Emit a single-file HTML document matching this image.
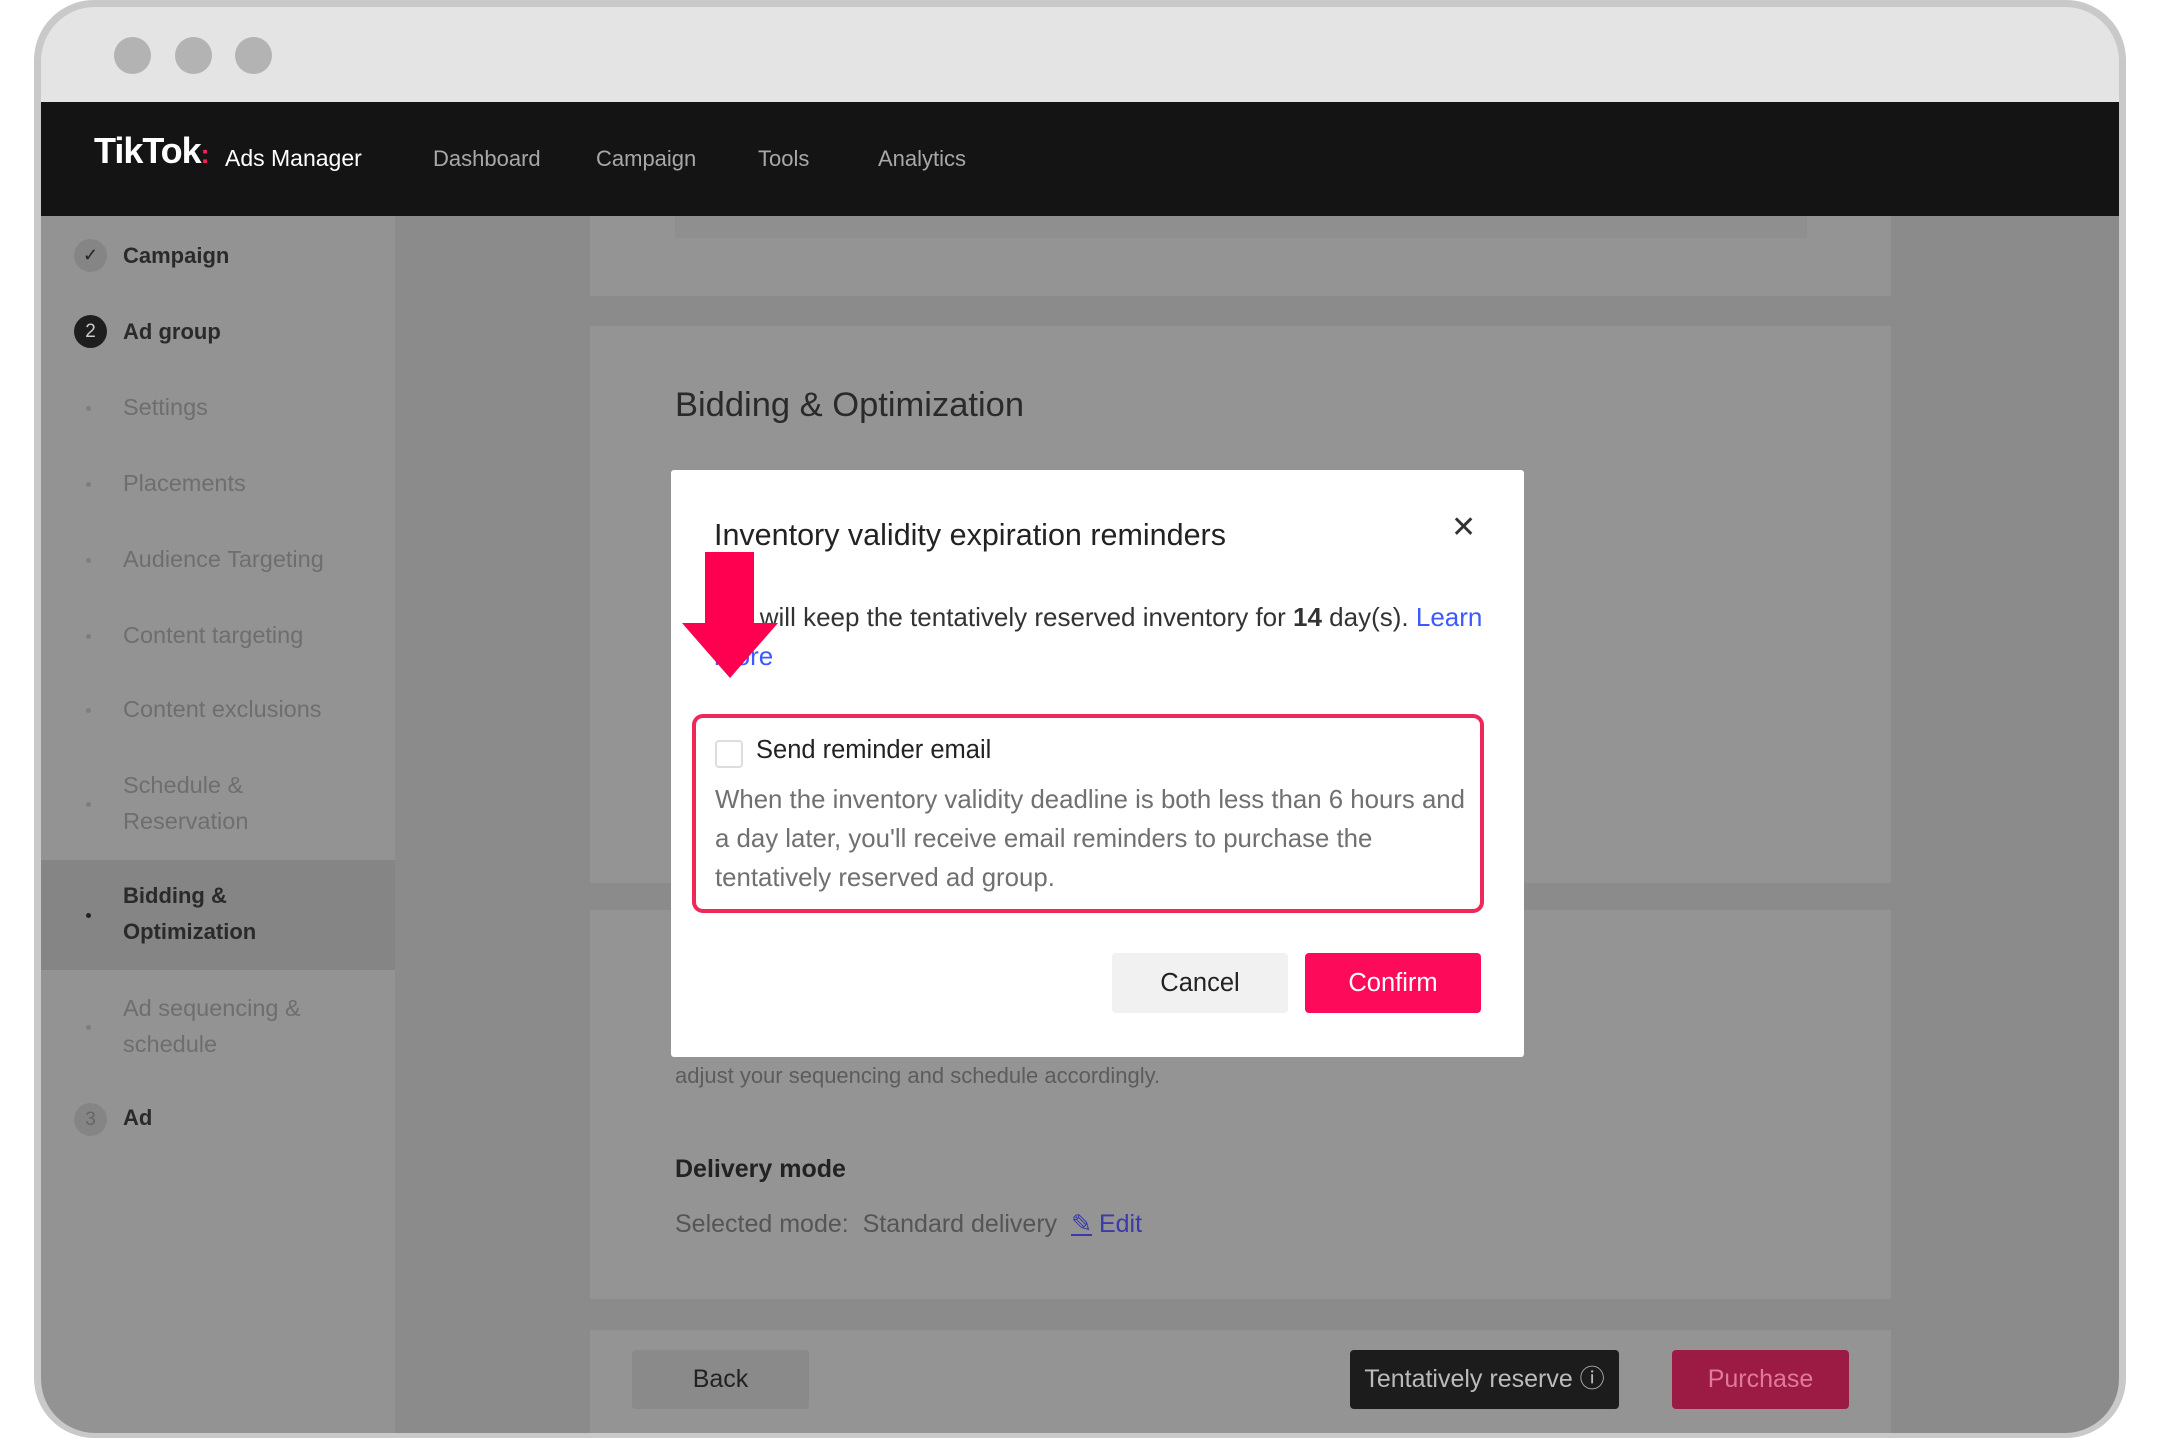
<!DOCTYPE html>
<html><head><meta charset="utf-8"><style>
*{margin:0;padding:0;box-sizing:border-box}
body{width:2160px;height:1440px;background:#fff;font-family:"Liberation Sans",sans-serif;position:relative;overflow:hidden}
.a{position:absolute}
.frame{left:34px;top:0;width:2092px;height:1438px;background:#c9c9c9;border-radius:60px}
.inner{left:41px;top:7px;width:2078px;height:1426px;background:#e4e4e4;border-radius:54px;overflow:hidden}
.dot{width:37px;height:37px;border-radius:50%;background:#b3b3b3;top:30px}
.hdr{left:0;top:95px;width:2078px;height:114px;background:#141414}
.nav{color:#a8a8a8;font-size:22px;top:44px}
.side{left:0;top:209px;width:354px;height:1220px;background:#939393}
.main{left:354px;top:209px;width:1724px;height:1220px;background:#8b8b8b}
.card{background:#949494}
.si{left:82px;font-size:23.5px;color:#6e6e6e;line-height:36px}
.sb{color:#2a2a2a;font-weight:bold;font-size:22px}
.bul{width:5px;height:5px;border-radius:50%;background:#7e7e7e;left:45px}
.modal{left:630px;top:463px;width:853px;height:587px;background:#fff;border-radius:3px}
</style></head><body>
<div class="a frame"></div>
<div class="a inner">
 <div class="a dot" style="left:73px"></div>
 <div class="a dot" style="left:134px"></div>
 <div class="a dot" style="left:194px"></div>
 <div class="a hdr">
  <div class="a" style="left:53px;top:28px;color:#fff;font-size:36px;font-weight:bold;letter-spacing:-1px">TikTok<span style="color:#ff1f5a;font-size:26px">:</span></div>
  <div class="a" style="left:184px;top:43px;color:#fff;font-size:23px">Ads Manager</div>
  <div class="a nav" style="left:392px">Dashboard</div>
  <div class="a nav" style="left:555px">Campaign</div>
  <div class="a nav" style="left:717px">Tools</div>
  <div class="a nav" style="left:837px">Analytics</div>
 </div>
 <div class="a side">
  <div class="a" style="left:33px;top:23px;width:33px;height:33px;border-radius:50%;background:#858585;color:#222;font-size:18px;text-align:center;line-height:33px">✓</div>
  <div class="a si sb" style="top:22px">Campaign</div>
  <div class="a" style="left:33px;top:99px;width:33px;height:33px;border-radius:50%;background:#1e1e1e;color:#ccc;font-size:19px;text-align:center;line-height:33px">2</div>
  <div class="a si sb" style="top:98px">Ad group</div>
  <div class="a bul" style="top:190px"></div><div class="a si" style="top:173px">Settings</div>
  <div class="a bul" style="top:266px"></div><div class="a si" style="top:249px">Placements</div>
  <div class="a bul" style="top:342px"></div><div class="a si" style="top:325px">Audience Targeting</div>
  <div class="a bul" style="top:418px"></div><div class="a si" style="top:401px">Content targeting</div>
  <div class="a bul" style="top:492px"></div><div class="a si" style="top:475px">Content exclusions</div>
  <div class="a bul" style="top:586px"></div><div class="a si" style="top:551px">Schedule &amp;<br>Reservation</div>
  <div class="a" style="left:0;top:644px;width:354px;height:110px;background:#858585"></div>
  <div class="a bul" style="top:697px;background:#222"></div><div class="a si sb" style="top:662px">Bidding &amp;<br>Optimization</div>
  <div class="a bul" style="top:809px"></div><div class="a si" style="top:774px">Ad sequencing &amp;<br>schedule</div>
  <div class="a" style="left:33px;top:887px;width:33px;height:33px;border-radius:50%;background:#858585;color:#666;font-size:19px;text-align:center;line-height:33px">3</div>
  <div class="a si sb" style="top:884px">Ad</div>
 </div>
 <div class="a main">
  <div class="a card" style="left:195px;top:0;width:1301px;height:80px"></div>
  <div class="a" style="left:280px;top:0;width:1132px;height:22px;background:#8f8f8f"></div>
  <div class="a card" style="left:195px;top:110px;width:1301px;height:557px"></div>
  <div class="a" style="left:280px;top:170px;font-size:34.5px;color:#2a2a2a">Bidding &amp; Optimization</div>
  <div class="a card" style="left:195px;top:694px;width:1301px;height:389px"></div>
  <div class="a" style="left:280px;top:847px;font-size:22px;color:#5c5c5c">adjust your sequencing and schedule accordingly.</div>
  <div class="a" style="left:280px;top:939px;font-size:25px;color:#222;font-weight:bold">Delivery mode</div>
  <div class="a" style="left:280px;top:993px;font-size:25px;color:#555">Selected mode:&nbsp; Standard delivery &nbsp;<span style="color:#3a3aa8"><u>✎</u> Edit</span></div>
  <div class="a card" style="left:195px;top:1114px;width:1301px;height:110px"></div>
  <div class="a" style="left:237px;top:1134px;width:177px;height:59px;background:#8a8a8a;border-radius:4px;font-size:25px;color:#222;text-align:center;line-height:59px">Back</div>
  <div class="a" style="left:955px;top:1134px;width:269px;height:59px;background:#1c1c1c;border-radius:4px;font-size:25px;color:#bbb;text-align:center;line-height:59px">Tentatively reserve ⓘ</div>
  <div class="a" style="left:1277px;top:1134px;width:177px;height:59px;background:#9b1b45;border-radius:4px;font-size:25px;color:#e07a99;text-align:center;line-height:59px">Purchase</div>
 </div>
 <div class="a modal">
  <div class="a" style="left:43px;top:48px;font-size:30.5px;color:#222">Inventory validity expiration reminders</div>
  <div class="a" style="left:780px;top:40px;font-size:30px;color:#333">✕</div>
  <div class="a" style="left:43px;top:128px;width:780px;font-size:26px;line-height:39px;color:#333">We will keep the tentatively reserved inventory for <b>14</b> day(s). <span style="color:#3d5afe">Learn more</span></div>
  <div class="a" style="left:21px;top:244px;width:792px;height:199px;border:4px solid #f0285a;border-radius:11px"></div>
  <div class="a" style="left:44px;top:270px;width:28px;height:28px;border:2px solid #ddd;border-radius:4px"></div>
  <div class="a" style="left:85px;top:266px;font-size:25.5px;color:#222">Send reminder email</div>
  <div class="a" style="left:44px;top:311px;width:760px;font-size:25.8px;line-height:39px;color:#707070">When the inventory validity deadline is both less than 6 hours and a day later, you'll receive email reminders to purchase the tentatively reserved ad group.</div>
  <div class="a" style="left:441px;top:483px;width:176px;height:60px;background:#f1f1f1;border-radius:4px;font-size:25.5px;color:#222;text-align:center;line-height:60px">Cancel</div>
  <div class="a" style="left:634px;top:483px;width:176px;height:60px;background:#fe0a5a;border-radius:4px;font-size:25.5px;color:#fff;text-align:center;line-height:60px">Confirm</div>
 </div>
</div>
<svg class="a" style="left:0;top:0" width="2160" height="1440"><polygon points="705,552 754,552 754,623 778,623 730,678 682,623 705,623" fill="#ff0050"/></svg>
</body></html>
